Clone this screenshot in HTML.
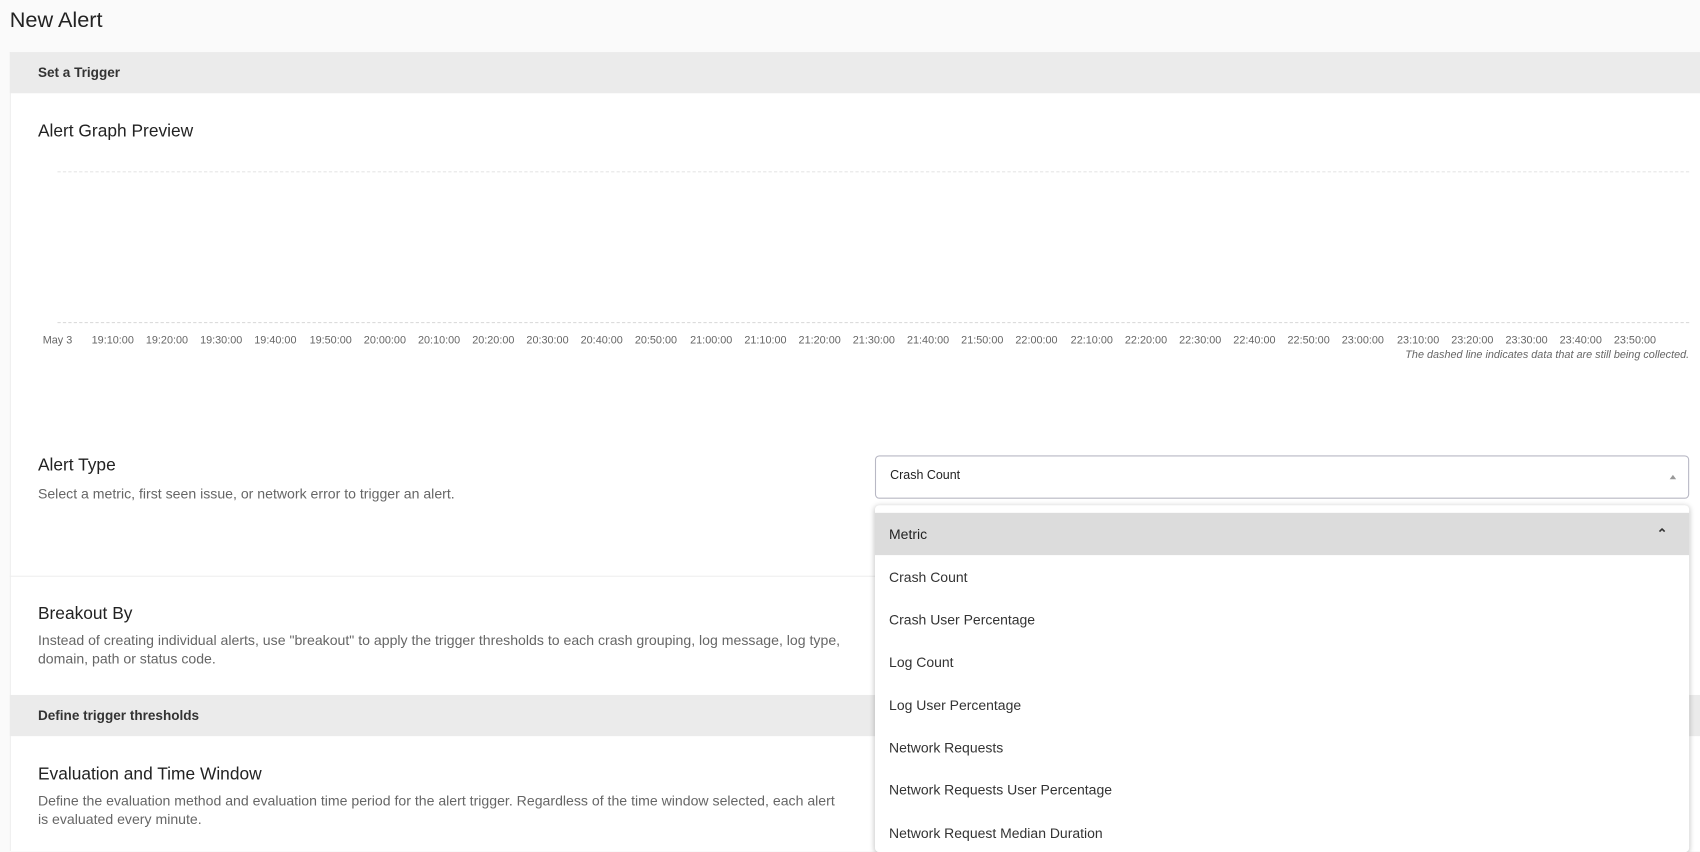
<!DOCTYPE html>
<html><head><meta charset="utf-8"><style>
*{margin:0;padding:0;box-sizing:border-box}
body{width:1700px;height:851px;overflow:hidden;background:#fafafa;font-family:"Liberation Sans",Arial,sans-serif;color:#333}
#w{position:absolute;left:0;top:0;width:1568px;height:785px;transform:scale(1.0842);transform-origin:0 0}
.a{position:absolute;white-space:nowrap}
.bar{position:absolute;left:9px;right:0;background:#ebebeb;height:38px}
.bar span{position:absolute;left:26px;top:12px;font-size:12.5px;font-weight:bold;color:#333}
.h{font-size:16px;color:#222}
.d{font-size:13px;color:#666;line-height:17px}
.t{position:absolute;top:309px;font-size:10px;color:#666;transform:translateX(-50%);white-space:nowrap}
.item{position:absolute;left:13px;font-size:12.9px;color:#333}
</style></head><body><div id="w">
<div class="a" style="left:9px;top:8px;font-size:20px;color:#222">New Alert</div>
<div style="position:absolute;left:9px;top:48px;right:0;bottom:0;background:#fff;border-left:1px solid #eee"></div>
<div class="bar" style="top:48px"><span>Set a Trigger</span></div>
<div class="a h" style="left:35px;top:113px">Alert Graph Preview</div>
<div style="position:absolute;left:53px;width:1505px;top:158px;border-top:1px dashed #e6e6e6"></div>
<div style="position:absolute;left:53px;width:1505px;top:297px;border-top:1px dashed #dcdcdc"></div>
<div class="t" style="left:53px">May 3</div>
<div class="t" style="left:104px">19:10:00</div><div class="t" style="left:154px">19:20:00</div><div class="t" style="left:204px">19:30:00</div><div class="t" style="left:254px">19:40:00</div><div class="t" style="left:305px">19:50:00</div><div class="t" style="left:355px">20:00:00</div><div class="t" style="left:405px">20:10:00</div><div class="t" style="left:455px">20:20:00</div><div class="t" style="left:505px">20:30:00</div><div class="t" style="left:555px">20:40:00</div><div class="t" style="left:605px">20:50:00</div><div class="t" style="left:656px">21:00:00</div><div class="t" style="left:706px">21:10:00</div><div class="t" style="left:756px">21:20:00</div><div class="t" style="left:806px">21:30:00</div><div class="t" style="left:856px">21:40:00</div><div class="t" style="left:906px">21:50:00</div><div class="t" style="left:956px">22:00:00</div><div class="t" style="left:1007px">22:10:00</div><div class="t" style="left:1057px">22:20:00</div><div class="t" style="left:1107px">22:30:00</div><div class="t" style="left:1157px">22:40:00</div><div class="t" style="left:1207px">22:50:00</div><div class="t" style="left:1257px">23:00:00</div><div class="t" style="left:1308px">23:10:00</div><div class="t" style="left:1358px">23:20:00</div><div class="t" style="left:1408px">23:30:00</div><div class="t" style="left:1458px">23:40:00</div><div class="t" style="left:1508px">23:50:00</div>
<div class="a" style="right:10px;top:322px;font-size:10px;font-style:italic;color:#666">The dashed line indicates data that are still being collected.</div>

<div class="a h" style="left:35px;top:421px">Alert Type</div>
<div class="a d" style="left:35px;top:447px">Select a metric, first seen issue, or network error to trigger an alert.</div>
<div style="position:absolute;left:807px;top:420px;width:751px;height:40px;border:1px solid #b8b8c4;border-radius:4px;background:#fff">
<div class="a" style="left:13px;top:12px;font-size:11.5px;color:#222">Crash Count</div>
<div class="a" style="right:11px;top:17px;width:0;height:0;border-left:3px solid transparent;border-right:3px solid transparent;border-bottom:4px solid #999"></div>
</div>
<div style="position:absolute;left:9px;width:798px;top:531px;border-top:1px solid #eee"></div>

<div class="a h" style="left:35px;top:558px">Breakout By</div>
<div class="a d" style="left:35px;top:582px">Instead of creating individual alerts, use "breakout" to apply the trigger thresholds to each crash grouping, log message, log type,<br>domain, path or status code.</div>
<div class="bar" style="top:641px"><span>Define trigger thresholds</span></div>
<div class="a h" style="left:35px;top:706px">Evaluation and Time Window</div>
<div class="a d" style="left:35px;top:730px">Define the evaluation method and evaluation time period for the alert trigger. Regardless of the time window selected, each alert<br>is evaluated every minute.</div>

<div style="position:absolute;left:807px;top:466px;width:751px;height:320px;background:#fff;border-radius:4px;box-shadow:0 1px 5px rgba(0,0,0,.25);overflow:hidden">
<div style="position:absolute;left:0;right:0;top:7px;height:39px;background:#dcdcdc">
<div class="item" style="top:12px;color:#222">Metric</div>
<div class="a" style="right:20px;top:12px;font-size:12px;font-weight:bold;color:#333">&#8963;</div>
</div>
<div class="item" style="top:59px">Crash Count</div>
<div class="item" style="top:98px">Crash User Percentage</div>
<div class="item" style="top:137px">Log Count</div>
<div class="item" style="top:177px">Log User Percentage</div>
<div class="item" style="top:216px">Network Requests</div>
<div class="item" style="top:255px">Network Requests User Percentage</div>
<div class="item" style="top:295px">Network Request Median Duration</div>
</div>
</div></body></html>
